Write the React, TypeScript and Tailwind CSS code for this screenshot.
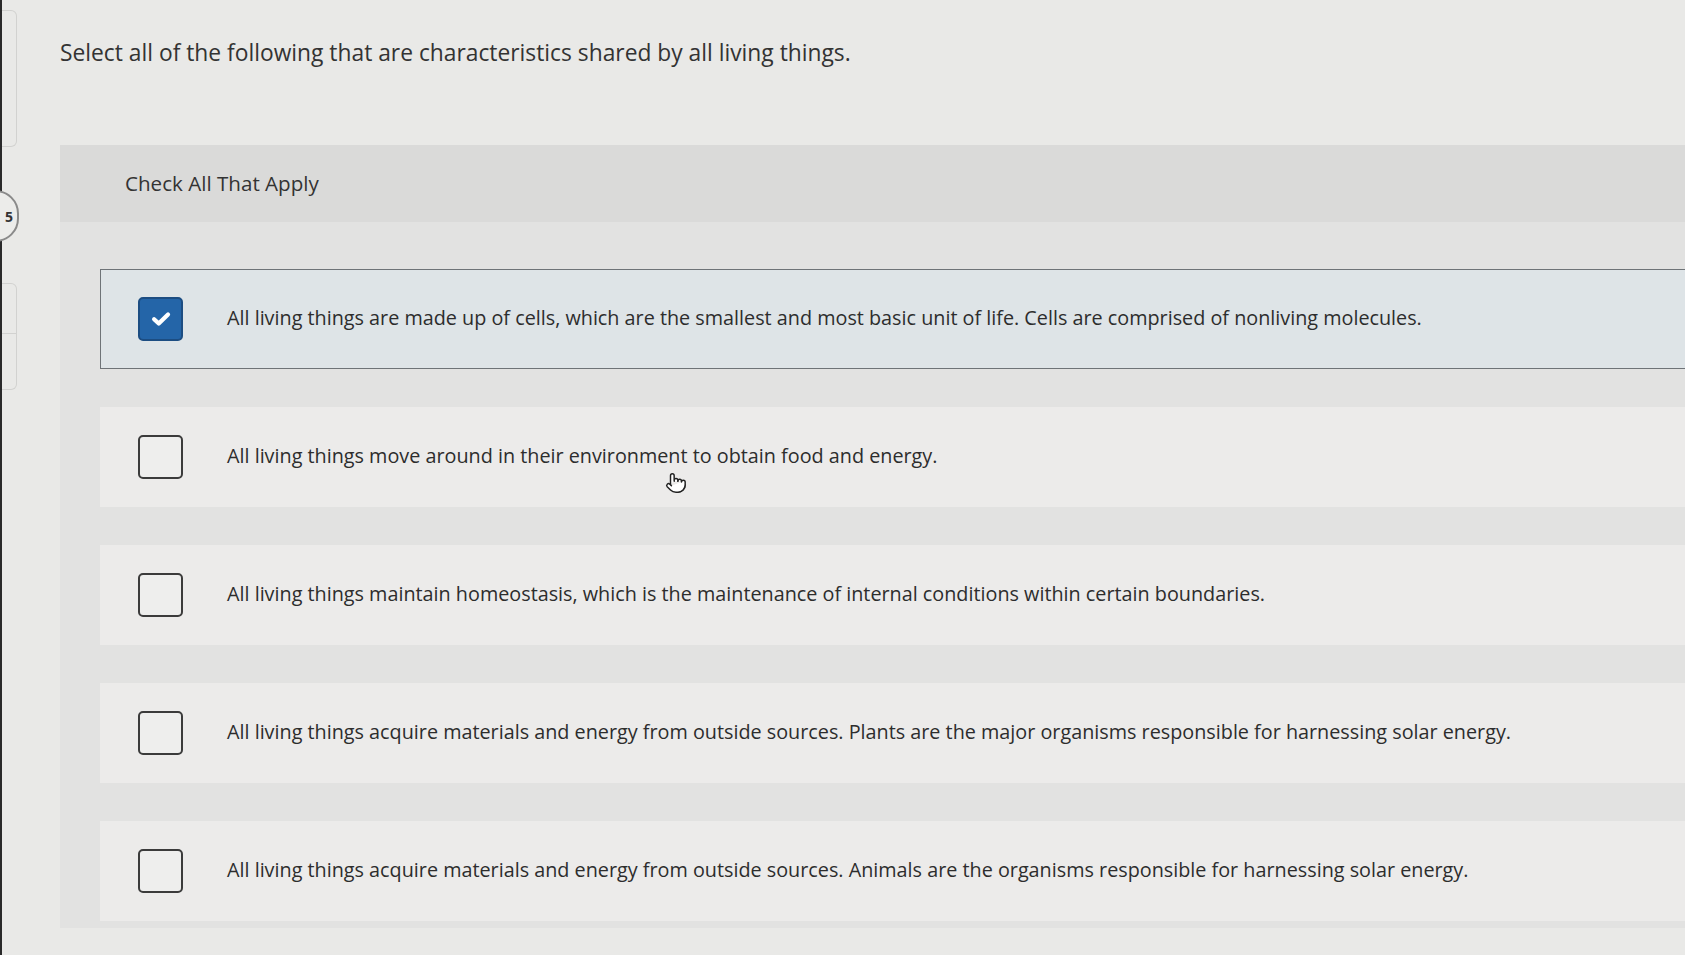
import React from "react";
import { Pointer } from "lucide-react";

const options = [
  "All living things are made up of cells, which are the smallest and most basic unit of life. Cells are comprised of nonliving molecules.",
  "All living things move around in their environment to obtain food and energy.",
  "All living things maintain homeostasis, which is the maintenance of internal conditions within certain boundaries.",
  "All living things acquire materials and energy from outside sources. Plants are the major organisms responsible for harnessing solar energy.",
  "All living things acquire materials and energy from outside sources. Animals are the organisms responsible for harnessing solar energy.",
];

const CheckBox: React.FC<{ checked: boolean }> = ({ checked }) =>
  checked ? (
    <div className="w-[45px] h-[44px] shrink-0 rounded-[5px] bg-[#2465a8] border-2 border-[#1c4d82] flex items-center justify-center">
      <svg width="30" height="30" viewBox="0 0 24 24" fill="none">
        <path d="M6.5 12.2 L10.2 15.6 L17.6 8.4" stroke="#ffffff" strokeWidth="3.4" strokeLinecap="round" strokeLinejoin="round" />
      </svg>
    </div>
  ) : (
    <div className="w-[45px] h-[44px] shrink-0 rounded-[5px] bg-[#eeeeed] border-2 border-[#3b3b3b]" />
  );

const App: React.FC = () => {
  return (
    <div
      className="relative w-[1685px] h-[955px] overflow-hidden flex bg-[#e9e9e7] text-[#303030]"
      style={{ fontFamily: "'Open Sans', Lato, Arial, sans-serif" }}
    >
      {/* left rail, cut by the screen edge */}
      <div className="w-[17px] shrink-0 border-l-2 border-[#2a2a2a] flex flex-col">
        <div className="mt-[10px] h-[137px] w-[15px] rounded-r-[6px] border border-l-0 border-[#d2d2d0]" />
        <div className="mt-[43px] -ml-[30px] w-[47px] h-[52px] rounded-full border-2 border-[#8a8a8a] bg-[#ececea] flex items-center justify-end pr-[4px] text-[14px] font-bold text-[#333]">
          5
        </div>
        <div className="mt-[41px] h-[107px] w-[15px] rounded-r-[6px] border border-l-0 border-[#d2d2d0] flex flex-col">
          <div className="h-[50px] border-b border-[#d2d2d0]" />
        </div>
      </div>

      {/* main column */}
      <div className="flex-1 flex flex-col pl-[43px]">
        <h1 className="pt-[38px] h-[69px] text-[22.8px] leading-[30px] font-normal text-[#333]">
          Select all of the following that are characteristics shared by all living things.
        </h1>

        <div className="mt-[76px] bg-[#e2e2e1] pb-[7px]">
          <div className="h-[77px] bg-[#dadad9] flex items-center pl-[65px] text-[20.6px] text-[#333]">
            Check All That Apply
          </div>

          <div className="pt-[47px] pl-[40px] flex flex-col gap-[38px]">
            {options.map((text, i) => (
              <div
                key={i}
                className={
                  i === 0
                    ? "h-[100px] flex items-center pl-[37px] bg-[#dee4e7] border border-r-0 border-[#6e7377]"
                    : "h-[100px] flex items-center pl-[37px] bg-[#ecebea] border border-r-0 border-transparent"
                }
              >
                <CheckBox checked={i === 0} />
                <span className="ml-[44px] -mt-[3px] text-[19.8px] leading-[26px] text-[#2d2d2d]">{text}</span>
              </div>
            ))}
          </div>
        </div>
      </div>

      {/* mouse pointer */}
      <div className="absolute left-[665px] top-[472px] text-[#222]">
        <Pointer size={22} strokeWidth={1.6} fill="#ffffff" />
      </div>
    </div>
  );
};

export default App;
